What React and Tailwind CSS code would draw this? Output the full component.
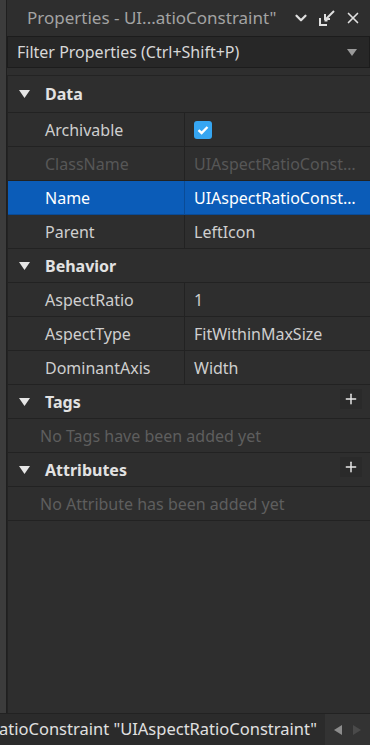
import { X, ChevronDown, Plus } from "lucide-react";

const font = { fontFamily: '"Noto Sans", "Open Sans", sans-serif' };

const Tri = () => (
  <svg width="11" height="8" viewBox="0 0 11 8" className="shrink-0">
    <path d="M0 0h11L5.5 8z" fill="#e6e6e6" />
  </svg>
);

const Header = ({ title, plus, tall }) => (
  <div
    className={`flex items-center ${tall ? "h-[37px]" : "h-[34px]"} border-b border-[#222] pl-[11px] pr-[8px]`}
  >
    <Tri />
    <span className="ml-[15px] font-bold text-[16px] text-[#e2e2e2]">{title}</span>
    {plus && (
      <span className="ml-auto -mt-[6px] w-[22px] h-[20px] flex items-center justify-center bg-[#2a2a2a] text-[#e8e8e8]">
        <Plus size={16} strokeWidth={2.2} />
      </span>
    )}
  </div>
);

const Row = ({ name, value, selected, disabled, children }) => (
  <div
    className={`flex h-[34px] border-b ${
      selected ? "bg-[#0b5cb8] border-[#0a4b96]" : "border-[#222]"
    }`}
  >
    <div
      className={`w-[177px] shrink-0 flex items-center pl-[37px] text-[16px] border-r ${
        selected ? "border-[#0a4b96] text-white" : "border-[#222]"
      } ${disabled ? "text-[#575757]" : selected ? "" : "text-[#cfcfcf]"}`}
    >
      {name}
    </div>
    <div
      className={`flex-1 min-w-0 flex items-center pl-[9px] pr-[2px] text-[16px] whitespace-nowrap ${
        selected ? "text-white" : disabled ? "text-[#575757]" : "text-[#cfcfcf]"
      }`}
    >
      {children || value}
    </div>
  </div>
);

const Empty = ({ text }) => (
  <div className="flex items-center h-[34px] border-b border-[#222] pl-[32px] text-[16px] text-[#5e5e5e]">
    {text}
  </div>
);

export default function App() {
  return (
    <div className="w-[370px] h-[745px] flex bg-[#3a3a3a] overflow-hidden" style={font}>
      <div className="w-[7px] shrink-0 bg-[#3c3c3c] border-r border-[#1f1f1f]" />
      <div className="flex-1 min-w-0 flex flex-col bg-[#2e2e2e]">
        <div className="h-[36px] flex items-center pl-[20px] pr-[8px] bg-[#2e2e2e]">
          <span className="text-[17px] text-[#a3a3a3] whitespace-nowrap">
            Properties - UI...atioConstraint"
          </span>
          <div className="ml-auto flex items-center gap-[8px] text-[#e0e0e0]">
            <ChevronDown size={18} strokeWidth={3} />
            <svg width="18" height="18" viewBox="0 0 18 18" fill="none" stroke="#e0e0e0" strokeWidth="2">
              <path d="M2 9v7h7" />
              <path d="M16 2L8 10" />
              <path d="M7 5v5h5" />
              <path d="M6.5 11.5h3" />
            </svg>
            <X size={18} strokeWidth={2.2} />
          </div>
        </div>
        <div className="h-[32px] flex items-center pl-[9px] pr-[12px] bg-[#272727] border border-[#1c1c1c]">
          <span className="text-[16px] text-[#d8d8d8]">Filter Properties (Ctrl+Shift+P)</span>
          <svg width="10" height="7" viewBox="0 0 10 7" className="ml-auto">
            <path d="M0 0h10L5 7z" fill="#9a9a9a" />
          </svg>
        </div>
        <div className="h-[8px] bg-[#2e2e2e] border-b border-[#232323]" />
        <div className="flex-1 flex flex-col bg-[#2e2e2e] border-l border-[#232323]">
          <Header title="Data" tall />
          <Row name="Archivable">
            <span className="w-[18px] h-[18px] rounded-[3px] bg-[#36a6f2] flex items-center justify-center">
              <svg width="12" height="10" viewBox="0 0 12 10">
                <path d="M1.5 5.2L4.6 8 10.5 2" stroke="white" strokeWidth="2.4" fill="none" />
              </svg>
            </span>
          </Row>
          <Row name="ClassName" value="UIAspectRatioConst…" disabled />
          <Row name="Name" value="UIAspectRatioConst…" selected />
          <Row name="Parent" value="LeftIcon" />
          <Header title="Behavior" />
          <Row name="AspectRatio" value="1" />
          <Row name="AspectType" value="FitWithinMaxSize" />
          <Row name="DominantAxis" value="Width" />
          <Header title="Tags" plus />
          <Empty text="No Tags have been added yet" />
          <Header title="Attributes" plus />
          <Empty text="No Attribute has been added yet" />
        </div>
        <div className="h-[32px] flex items-center bg-[#2b2b2b] border-t border-[#222] -ml-[8px]">
          <div className="flex-1 min-w-0 flex justify-end pr-[8px]">
            <span className="text-[16.5px] text-[#e0e0e0] whitespace-nowrap">
              atioConstraint "UIAspectRatioConstraint"
            </span>
          </div>
          <div className="w-[45px] h-full flex items-center justify-around bg-[#333] px-[4px]">
            <svg width="8" height="10" viewBox="0 0 8 10"><path d="M8 0v10L0 5z" fill="#8c8c8c" /></svg>
            <svg width="8" height="10" viewBox="0 0 8 10"><path d="M0 0v10l8-5z" fill="#4a4a4a" /></svg>
          </div>
        </div>
      </div>
    </div>
  );
}
